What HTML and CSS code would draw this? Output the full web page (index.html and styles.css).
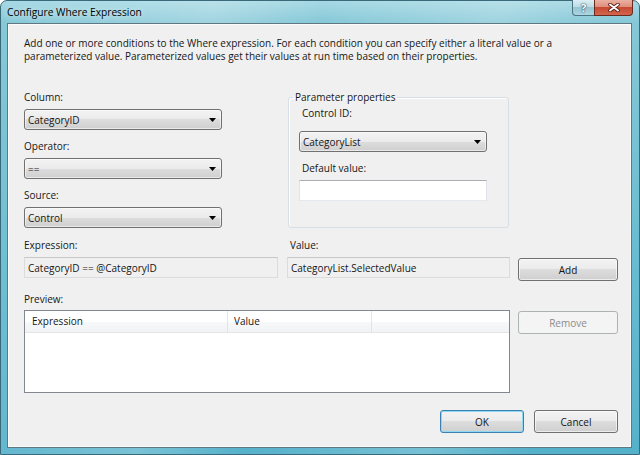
FILE: index.html
```html
<!DOCTYPE html>
<html>
<head>
<meta charset="utf-8">
<title>Configure Where Expression</title>
<link rel="stylesheet" href="styles.css">
</head>
<body>
<div class="window">
  <div class="titlebar">
    <span class="title">Configure Where Expression</span>
    <div class="caption-buttons">
      <span class="cap-btn help">?</span>
      <span class="cap-btn close">
        <svg width="12" height="9" viewBox="0 0 12 9">
          <path d="M2 1.5 L10 7.5 M10 1.5 L2 7.5" stroke="#5a1d14" stroke-width="3.6" stroke-linecap="round" fill="none"/>
          <path d="M2 1.5 L10 7.5 M10 1.5 L2 7.5" stroke="#ffffff" stroke-width="1.9" stroke-linecap="round" fill="none"/>
        </svg>
      </span>
    </div>
  </div>
  <div class="client">
    <p class="intro">Add one or more conditions to the Where expression. For each condition you can specify either a literal value or a<br>parameterized value. Parameterized values get their values at run time based on their properties.</p>
    <div class="form-grid">
      <div class="left-fields">
        <div class="lbl">Column:</div>
        <div class="combo wide"><span class="combo-text">CategoryID</span><svg class="arrow" width="7" height="4" viewBox="0 0 7 4"><polygon points="0,0 7,0 3.5,4" fill="#000"/></svg></div>
        <div class="lbl">Operator:</div>
        <div class="combo wide"><span class="combo-text">==</span><svg class="arrow" width="7" height="4" viewBox="0 0 7 4"><polygon points="0,0 7,0 3.5,4" fill="#000"/></svg></div>
        <div class="lbl">Source:</div>
        <div class="combo wide last"><span class="combo-text">Control</span><svg class="arrow" width="7" height="4" viewBox="0 0 7 4"><polygon points="0,0 7,0 3.5,4" fill="#000"/></svg></div>
      </div>
      <fieldset class="group">
        <legend>Parameter properties</legend>
        <div class="lbl indent control-lbl">Control ID:</div>
        <div class="combo"><span class="combo-text">CategoryList</span><svg class="arrow" width="7" height="4" viewBox="0 0 7 4"><polygon points="0,0 7,0 3.5,4" fill="#000"/></svg></div>
        <div class="lbl indent default-lbl">Default value:</div>
        <div class="textbox"></div>
      </fieldset>
      <div class="lbl row-lbl expr-lbl">Expression:</div>
      <div class="lbl row-lbl value-lbl">Value:</div>
      <div class="rotext expr-box">CategoryID == @CategoryID</div>
      <div class="rotext value-box">CategoryList.SelectedValue</div>
      <button class="btn add-btn">Add</button>
      <div class="lbl preview-lbl">Preview:</div>
      <div class="listview">
        <div class="lv-head">
          <div class="lv-col c1">Expression</div>
          <div class="lv-col c2">Value</div>
          <div class="lv-col c3"></div>
        </div>
      </div>
      <button class="btn disabled remove-btn">Remove</button>
    </div>
    <div class="footer">
      <button class="btn ok">OK</button>
      <button class="btn">Cancel</button>
    </div>
  </div>
</div>
</body>
</html>
```

FILE: styles.css
```css
* { box-sizing: border-box; }
html, body { margin: 0; padding: 0; }
body {
  width: 640px;
  height: 455px;
  overflow: hidden;
  background: #ffffff;
  font-family: "Open Sans", "Noto Sans", sans-serif;
  font-size: 10px;
  color: #161616;
}

.window {
  width: 640px;
  height: 455px;
  border: 1px solid #3a6a7a;
  border-radius: 7px 7px 0 0;
  display: flex;
  flex-direction: column;
  background:
    linear-gradient(100deg, rgba(255,255,255,0) 0%, rgba(255,255,255,0.22) 30%, rgba(255,255,255,0) 45%, rgba(255,255,255,0.2) 70%, rgba(255,255,255,0) 85%),
    linear-gradient(180deg, #a6d9e4 0px, #86c8d7 22px, #67bbd0 60%, #55b1ca 100%);
}

/* title bar */
.titlebar {
  height: 22px;
  display: flex;
  align-items: flex-start;
  flex-shrink: 0;
}
.title {
  padding-left: 6px;
  line-height: 22px;
  font-size: 10.2px;
  color: #000;
  text-shadow: 0 0 6px rgba(255,255,255,0.9);
}
.caption-buttons {
  margin-left: auto;
  margin-right: 6px;
  margin-top: -1px;
  display: flex;
}
.cap-btn {
  height: 16px;
  display: flex;
  align-items: center;
  justify-content: center;
  border: 1px solid #4c7483;
  border-top: none;
}
.help {
  width: 22px;
  border-radius: 0 0 0 4px;
  border-right: none;
  background: linear-gradient(180deg, #dbeef3 0%, #bddde5 45%, #98c6d2 50%, #acd5df 100%);
  color: #fff;
  font-weight: bold;
  font-size: 11px;
  text-shadow: 0 0 2px #1f3c48, 0 0 1px #1f3c48;
}
.close {
  width: 39px;
  border-color: #6b2a20;
  border-radius: 0 0 4px 0;
  background: linear-gradient(180deg, #eab1a3 0%, #de8e7c 45%, #c84a33 50%, #d2664c 100%);
}

/* client area */
.client {
  flex: 1;
  margin: 0 7px 6px 6px;
  border: 1px solid #5f7780;
  box-shadow: inset 0 0 0 1px #fbfbfb;
  background: #f0f0f0;
  padding: 13px 13px 0 16px;
  display: flex;
  flex-direction: column;
}
.intro {
  margin: 0 0 27px 0;
  line-height: 13px;
  white-space: nowrap;
}

.form-grid {
  display: grid;
  grid-template-columns: 255px 223px 100px;
  column-gap: 8px;
  grid-template-areas:
    "left group ."
    "elbl vlbl ."
    "ebox vbox add"
    "plbl plbl ."
    "list list remove";
}

.lbl {
  height: 14px;
  line-height: 14px;
  margin-bottom: 5px;
  white-space: nowrap;
}

.left-fields {
  grid-area: left;
  display: flex;
  flex-direction: column;
}

.combo {
  height: 21px;
  display: flex;
  align-items: center;
  padding-left: 3px;
  border: 1px solid #707070;
  border-radius: 3px;
  background: linear-gradient(180deg, #f3f3f3 0%, #ebebeb 50%, #dddddd 50%, #cfcfcf 100%);
  box-shadow: inset 0 0 0 1px rgba(255,255,255,0.55);
}
.combo.wide { width: 198px; margin-bottom: 9px; }
.combo.wide.last { margin-bottom: 0; }
.combo-text { flex: 1; white-space: nowrap; }
.arrow { margin-right: 5px; flex-shrink: 0; }

.group {
  grid-area: group;
  margin: 0 1px;
  padding: 2px 21px 0 10px;
  border: 1px solid #d5dfe5;
  border-radius: 3px;
  box-shadow: inset 1px 1px 0 #ffffff;
  min-width: 0;
}
.group legend {
  padding: 0 2px;
  margin-left: -6px;
  line-height: 14px;
  height: 14px;
}
.indent { margin-left: 3px; }
.control-lbl { margin-bottom: 11px; }
.default-lbl { margin-top: 9px; }

.textbox {
  height: 21px;
  background: #ffffff;
  border: 1px solid #e2e3ea;
  border-top-color: #abadb3;
  border-bottom-color: #e3e9ef;
}

.row-lbl { margin-top: 10px; }
.expr-lbl { grid-area: elbl; }
.value-lbl { grid-area: vlbl; margin-left: 3px; }

.rotext {
  height: 21px;
  display: flex;
  align-items: center;
  padding-left: 3px;
  border: 1px solid #dcdcdc;
  border-top-color: #c8c8c8;
  background: #f0f0f0;
  white-space: nowrap;
}
.expr-box { grid-area: ebox; width: 254px; }
.value-box { grid-area: vbox; }

.btn {
  height: 23px;
  padding: 0;
  font-family: inherit;
  font-size: 10px;
  color: #161616;
  border: 1px solid #707070;
  border-radius: 3px;
  background: linear-gradient(180deg, #f3f3f3 0%, #ebebeb 50%, #dddddd 50%, #cfcfcf 100%);
  box-shadow: inset 0 0 0 1px rgba(255,255,255,0.6);
}
.add-btn { grid-area: add; margin-top: 1px; }
.remove-btn { grid-area: remove; margin-top: 1px; align-self: start; }
.btn.disabled {
  border-color: #adb2b5;
  background: #f4f4f4;
  color: #8b8b8b;
  box-shadow: none;
}

.preview-lbl { grid-area: plbl; margin-top: 11px; margin-bottom: 4px; }

.listview {
  grid-area: list;
  height: 83px;
  border: 1px solid #828790;
  background: #ffffff;
}
.lv-head {
  display: flex;
  height: 22px;
  border-bottom: 1px solid #e5e5e5;
  background: linear-gradient(180deg, #ffffff 0%, #ffffff 50%, #f7f8fa 50%, #f2f3f5 100%);
}
.lv-col {
  line-height: 21px;
  border-right: 1px solid #e3e4e6;
  white-space: nowrap;
}
.c1 { width: 203px; padding-left: 7px; }
.c2 { width: 144px; padding-left: 6px; }
.c3 { flex: 1; border-right: none; }

.footer {
  display: flex;
  justify-content: flex-end;
  gap: 10px;
  margin-top: 17px;
}
.footer .btn { width: 84px; }
.btn.ok {
  border-color: #3c7fb1;
  box-shadow: inset 0 0 0 1px #8fd8f3;
}
```
